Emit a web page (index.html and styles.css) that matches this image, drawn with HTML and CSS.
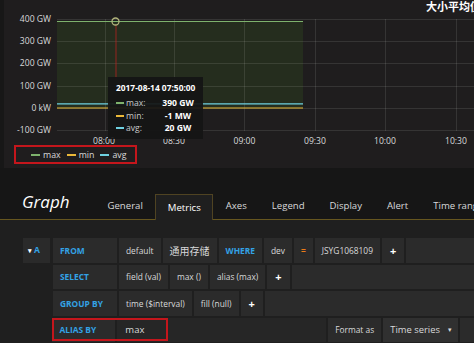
FILE: index.html
```html
<!DOCTYPE html>
<html lang="zh">
<head>
    <meta charset="UTF-8">
    <meta name="viewport" content="width=device-width, initial-scale=1.0">
    <title>Graph - Metrics</title>
    <link rel="stylesheet" href="styles.css">
</head>
<body>
    <div class="panel">
        <svg class="chart" width="470" height="145" viewBox="4 0 470 145">
            <!-- area bajo la serie max -->
            <rect x="57" y="21.7" width="246" height="86.8" fill="#27301f" opacity="0.85"/>
            <g stroke="#ffffff" stroke-opacity="0.1" stroke-width="1">
                <line x1="57" y1="19.5" x2="474" y2="19.5"/>
                <line x1="57" y1="41.5" x2="474" y2="41.5"/>
                <line x1="57" y1="63.5" x2="474" y2="63.5"/>
                <line x1="57" y1="86.5" x2="474" y2="86.5"/>
                <line x1="57" y1="108.5" x2="474" y2="108.5"/>
                <line x1="57" y1="130.5" x2="474" y2="130.5"/>
                <line x1="105.5" y1="19" x2="105.5" y2="131"/>
                <line x1="174.5" y1="19" x2="174.5" y2="131"/>
                <line x1="244.5" y1="19" x2="244.5" y2="131"/>
                <line x1="315.5" y1="19" x2="315.5" y2="131"/>
                <line x1="385.5" y1="19" x2="385.5" y2="131"/>
                <line x1="456.5" y1="19" x2="456.5" y2="131"/>
            </g>
            <!-- series -->
            <line x1="57" y1="21.5" x2="303" y2="21.5" stroke="#7eb26d" stroke-width="1.2"/>
            <line x1="57" y1="103.8" x2="303" y2="103.8" stroke="#6ed0e0" stroke-width="1.2"/>
            <line x1="57" y1="108" x2="303" y2="108" stroke="#eab839" stroke-width="1.2"/>
            <!-- crosshair -->
            <line x1="116" y1="25" x2="116" y2="80" stroke="#c42020" stroke-opacity="0.7" stroke-width="1"/>
            <circle cx="115.5" cy="21.5" r="3.5" fill="none" stroke="#b3b57c" stroke-width="1.3"/>
            <g class="axis-y" text-anchor="end">
                <text x="51" y="22">400 GW</text>
                <text x="51" y="44">300 GW</text>
                <text x="51" y="66">200 GW</text>
                <text x="51" y="89">100 GW</text>
                <text x="51" y="111">0 kW</text>
                <text x="51" y="133">-100 GW</text>
            </g>
            <g class="axis-x" text-anchor="middle">
                <text x="104" y="143.5">08:00</text>
                <text x="174" y="143.5">08:30</text>
                <text x="244.5" y="143.5">09:00</text>
                <text x="315" y="143.5">09:30</text>
                <text x="385" y="143.5">10:00</text>
                <text x="456" y="143.5">10:30</text>
            </g>
        </svg>

        <div class="panel-title">大小平均值</div>

        <div class="tooltip">
            <div class="tooltip-time">2017-08-14 07:50:00</div>
            <div class="tooltip-row">
                <span class="swatch swatch-max"></span>
                <span class="tooltip-name">max:</span>
                <span class="tooltip-value">390 GW</span>
            </div>
            <div class="tooltip-row">
                <span class="swatch swatch-min"></span>
                <span class="tooltip-name">min:</span>
                <span class="tooltip-value">-1 MW</span>
            </div>
            <div class="tooltip-row">
                <span class="swatch swatch-avg"></span>
                <span class="tooltip-name">avg:</span>
                <span class="tooltip-value">20 GW</span>
            </div>
        </div>

        <div class="legend">
            <div class="legend-item"><span class="swatch swatch-max"></span>max</div>
            <div class="legend-item"><span class="swatch swatch-min"></span>min</div>
            <div class="legend-item"><span class="swatch swatch-avg"></span>avg</div>
        </div>
    </div>

    <div class="edit-header">
        <h2 class="edit-title">Graph</h2>
        <ul class="tabs">
            <li class="tab">General</li>
            <li class="tab active">Metrics</li>
            <li class="tab">Axes</li>
            <li class="tab">Legend</li>
            <li class="tab">Display</li>
            <li class="tab">Alert</li>
            <li class="tab">Time range</li>
        </ul>
    </div>

    <div class="editor">
        <div class="query-row">
            <div class="row-head"><span class="caret">▾</span> A</div>
            <div class="cell keyword">FROM</div>
            <div class="cell">default</div>
            <div class="cell cjk">通用存储</div>
            <div class="cell keyword-inline">WHERE</div>
            <div class="cell">dev</div>
            <div class="cell operator">=</div>
            <div class="cell">JSYG1068109</div>
            <div class="cell plus">+</div>
            <div class="cell filler"></div>
        </div>
        <div class="query-row">
            <div class="row-spacer"></div>
            <div class="cell keyword">SELECT</div>
            <div class="cell">field (val)</div>
            <div class="cell">max ()</div>
            <div class="cell">alias (max)</div>
            <div class="cell plus">+</div>
            <div class="cell filler"></div>
        </div>
        <div class="query-row">
            <div class="row-spacer"></div>
            <div class="cell keyword">GROUP BY</div>
            <div class="cell">time ($interval)</div>
            <div class="cell">fill (null)</div>
            <div class="cell plus">+</div>
            <div class="cell filler"></div>
        </div>
        <div class="query-row alias-row">
            <div class="row-spacer"></div>
            <div class="cell keyword">ALIAS BY</div>
            <div class="cell alias-input">max</div>
            <div class="cell format-label">Format as</div>
            <div class="cell format-select">Time series <span class="select-caret">▾</span></div>
            <div class="cell filler"></div>
            <div class="highlight"></div>
        </div>
    </div>
</body>
</html>
```

FILE: styles.css
```css
* {
    margin: 0;
    padding: 0;
    box-sizing: border-box;
}

body {
    width: 474px;
    height: 343px;
    overflow: hidden;
    background: #1f1f1f;
    font-family: 'Open Sans', 'Noto Sans CJK SC', sans-serif;
    color: #d8d9da;
}

/* Panel del grafico */
.panel {
    position: relative;
    height: 168px;
    background: #1f1d1e;
    border-left: 4px solid #171717;
}

.chart {
    display: block;
}

.axis-y text,
.axis-x text {
    font-family: 'Open Sans', sans-serif;
    font-size: 8.6px;
    fill: #d8d9da;
}

.panel-title {
    position: absolute;
    top: 0;
    left: 422px;
    font-size: 11px;
    font-weight: bold;
    color: #ffffff;
    white-space: nowrap;
    line-height: 13px;
}

.tooltip {
    position: absolute;
    left: 104px;
    top: 77px;
    width: 95px;
    height: 62px;
    background: rgba(20, 20, 20, 0.93);
    padding: 5px 0 0 8px;
}

.tooltip-time {
    font-size: 8.4px;
    font-weight: bold;
    color: #ffffff;
    line-height: 12px;
    margin-bottom: 3px;
}

.tooltip-row {
    display: flex;
    align-items: center;
    height: 12.5px;
    font-size: 8.6px;
}

.tooltip-name {
    width: 32px;
    margin-left: 2px;
    color: #c8c9ca;
}

.tooltip-value {
    width: 40px;
    text-align: center;
    font-weight: bold;
    color: #ffffff;
}

.swatch {
    display: inline-block;
    width: 8px;
    height: 2px;
}

.swatch-max { background: #7eb26d; }
.swatch-min { background: #eab839; }
.swatch-avg { background: #6ed0e0; }

.legend {
    display: flex;
    align-items: center;
    gap: 6px;
    width: 123px;
    height: 19px;
    margin-left: 10px;
    padding-left: 15px;
    border: 2px solid #c4161c;
    font-size: 8.8px;
}

.legend-item {
    display: flex;
    align-items: center;
    gap: 3px;
}

.legend-item .swatch {
    width: 9px;
}

/* Cabecera del editor */
.edit-header {
    display: flex;
    align-items: flex-end;
    height: 52px;
    background: #161616;
    border-bottom: 1px solid #66561f;
    padding-left: 22px;
}

.edit-title {
    flex-shrink: 0;
    font-size: 17px;
    font-style: italic;
    font-weight: normal;
    color: #ffffff;
    width: 73px;
    line-height: 22px;
    margin-bottom: 6px;
}

.tabs {
    display: flex;
    flex-shrink: 0;
    list-style: none;
    white-space: nowrap;
}

.tab {
    font-size: 9.6px;
    height: 25px;
    line-height: 21px;
    padding: 0 11.5px;
    border: 1px solid transparent;
    border-bottom: none;
    margin-bottom: -1px;
}

.tab.active {
    background: #1f1f1f;
    border-color: #4f4322;
    color: #ffffff;
    height: 26px;
    line-height: 25px;
}

/* Editor de consultas */
.editor {
    display: flex;
    flex-direction: column;
    gap: 2px;
    padding: 18px 0 0 23px;
}

.query-row {
    position: relative;
    display: flex;
    gap: 2px;
    height: 24.5px;
}

.row-head,
.row-spacer {
    width: 27px;
    margin-right: 1px;
}

.row-head {
    background: #2a2a2a;
    color: #33a2e5;
    font-size: 8.6px;
    font-weight: bold;
    display: flex;
    align-items: center;
    padding-left: 5px;
    gap: 2px;
}

.caret {
    color: #ffffff;
    font-size: 7px;
}

.cell {
    display: flex;
    align-items: center;
    padding: 0 7px;
    background: #2b2b2b;
    font-size: 8.4px;
    white-space: nowrap;
}

.keyword {
    width: 64px;
    color: #33a2e5;
    font-weight: bold;
}

.keyword-inline {
    color: #33a2e5;
    font-weight: bold;
}

.cjk {
    font-size: 10px;
}

.operator {
    color: #eb7b18;
    font-weight: bold;
    padding: 0 7px;
}

.plus {
    color: #ffffff;
    font-weight: bold;
    font-size: 11px;
    padding: 0 8px;
}

.filler {
    flex: 1;
}

.alias-input {
    width: 213px;
    font-size: 9.5px;
    padding-left: 8px;
    background: #262626;
}

.format-label {
    width: 54px;
    font-size: 8.4px;
}

.format-select {
    width: 76px;
    font-size: 9.4px;
    background: #303030;
    justify-content: space-between;
    padding: 0 6px 0 7px;
}

.select-caret {
    font-size: 7px;
}

.highlight {
    position: absolute;
    left: 29px;
    top: 0;
    width: 116px;
    height: 23px;
    border: 2px solid #c4161c;
}
```
